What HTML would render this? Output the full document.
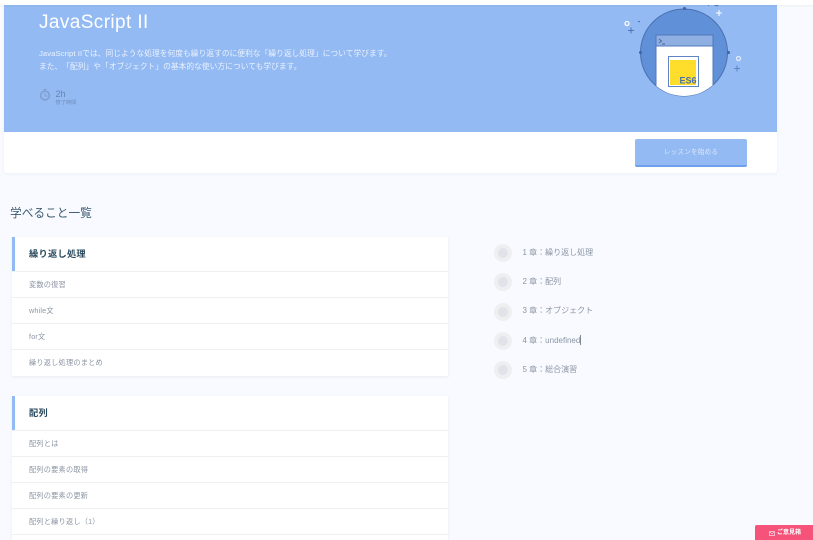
<!DOCTYPE html>
<html lang="ja"><head><meta charset="utf-8">
<style>
html,body{margin:0;padding:0;width:813px;height:540px;overflow:hidden;background:#f8faff;font-family:"Liberation Sans","Noto Sans CJK JP",sans-serif;text-spacing-trim:space-all}
#w{position:absolute;left:0;top:0;width:813px;height:540px;overflow:hidden;filter:blur(.3px)}
.a{position:absolute;white-space:nowrap}
.card{position:absolute;left:12px;width:436px;background:#fff;box-shadow:0 1px 3px rgba(40,60,90,.08);overflow:hidden}
.hd{position:absolute;left:0;top:0;width:100%;height:34px;border-left:3px solid #92baf3;box-sizing:border-box;font-size:9.200px;font-weight:bold;color:#2b4a5f;letter-spacing:.3px;line-height:35px;padding-left:14px}
.it{position:absolute;left:0;width:100%;height:26px;border-top:1px solid #edeff2;box-sizing:border-box;font-size:7.200px;color:#8b95a3;letter-spacing:.2px;line-height:26.500px;padding-left:17px}
.dot{position:absolute;left:494px;width:18px;height:18px;border-radius:50%;background:#eeeff1}
.dot i{position:absolute;left:4px;top:4px;width:10px;height:10px;border-radius:50%;background:#e1e3e8}
.ch{position:absolute;left:522.500px;font-size:8px;color:#8b95a3;letter-spacing:0;white-space:nowrap;line-height:12px}
</style></head><body><div id="w">
<div class="a" style="left:4px;top:5px;width:773px;height:168px;background:#fff;border-radius:0 0 3px 3px;box-shadow:0 1px 3px rgba(40,60,90,.06)"></div>
<div class="a" style="left:4px;top:5px;width:773px;height:127px;background:#94baf3"></div>
<div class="a" style="left:39px;top:10px;font-size:19px;line-height:26px;color:#fff;letter-spacing:.4px">JavaScript II</div>
<div class="a" style="left:39px;top:47px;font-size:7.700px;line-height:13px;color:#eaf2fd;letter-spacing:.07px">JavaScript IIでは、同じような処理を何度も繰り返すのに便利な「繰り返し処理」について学びます。<br>また、「配列」や「オブジェクト」の基本的な使い方についても学びます。</div>
<svg class="a" style="left:39px;top:88px" width="12" height="14" viewBox="0 0 12 14"><circle cx="6" cy="7.500" r="4.400" fill="none" stroke="#7f9fcf" stroke-width="1.600"/><path d="M6 5v3h2.500M4.500 1.500h3" fill="none" stroke="#7f9fcf" stroke-width="1"/></svg>
<div class="a" style="left:55.500px;top:89px;font-size:9px;line-height:11px;color:#6684b0">2h</div>
<div class="a" style="left:55.500px;top:99.500px;font-size:5.200px;line-height:7px;color:#6f8db9">修了時間</div>

<svg class="a" style="left:600px;top:0" width="177" height="132" viewBox="0 0 177 132">
<defs><clipPath id="c"><circle cx="84" cy="52.500" r="43.500"/></clipPath></defs>
<circle cx="84" cy="52.500" r="43.500" fill="#6090d8" stroke="#4a70b0" stroke-width="1"/>
<g clip-path="url(#c)">
<rect x="56" y="35" width="57" height="70" fill="#fff" stroke="#4f78bd" stroke-width="1"/>
<rect x="56" y="35" width="57" height="11" fill="#8fafe3" stroke="#4f78bd" stroke-width="1"/>
<path d="M59 39l2.500 2-2.500 2M62 44h3" fill="none" stroke="#2f4f80" stroke-width=".7"/>
<rect x="68.500" y="56.500" width="30" height="30" fill="#fff" stroke="#5f84c4" stroke-width="1"/>
<rect x="70" y="60" width="26" height="25" fill="#ffde2b"/>
</g>
<text x="79.500" y="83.500" font-family="Liberation Sans" font-weight="bold" font-size="9" fill="#4a6fae">ES6</text>
<circle cx="84.500" cy="8.500" r="1.500" fill="#3f63a3"/><circle cx="40.500" cy="52.500" r="1.500" fill="#3f63a3"/><circle cx="128.500" cy="52.500" r="1.500" fill="#3f63a3"/>
<circle cx="27" cy="23.500" r="2" fill="none" stroke="#fff" stroke-width="1.200"/>
<circle cx="39" cy="21.500" r=".8" fill="#3f63a3"/>
<path d="M31 27.500v6M28 30.500h6" stroke="#3f63a3" stroke-width=".8"/>
<path d="M119 10v6M116 13h6" stroke="#fff" stroke-width="1"/>
<circle cx="116.500" cy="3.500" r="2.300" fill="none" stroke="#3f63a3" stroke-width=".8"/>
<circle cx="108.500" cy="5" r=".7" fill="#3f63a3"/>
<circle cx="138.500" cy="58.500" r="2" fill="none" stroke="#e4edfb" stroke-width="1.200"/>
<path d="M137 65.500v6M134 68.500h6" stroke="#4f78bd" stroke-width=".8"/>
</svg>
<div class="a" style="left:0;top:0;width:813px;height:5px;background:#fff;box-shadow:0 1px 2px rgba(40,60,90,.06)"></div>

<div class="a" style="left:635px;top:139px;width:112px;height:28px;background:#94baf3;border-bottom:2px solid #6fa0ec;box-sizing:border-box;border-radius:2px;text-align:center;font-size:6.600px;line-height:27px;color:#d9e6fa;letter-spacing:.2px">レッスンを始める</div>

<div class="a" style="left:10px;top:206px;font-size:11.700px;line-height:16px;color:#3b5a70">学べること一覧</div>

<div class="card" style="top:237px;height:139px">
<div class="hd">繰り返し処理</div>
<div class="it" style="top:34px">変数の復習</div>
<div class="it" style="top:60px">while文</div>
<div class="it" style="top:86px">for文</div>
<div class="it" style="top:112px;height:27px">繰り返し処理のまとめ</div>
</div>

<div class="card" style="top:396px;height:144px">
<div class="hd">配列</div>
<div class="it" style="top:34px">配列とは</div>
<div class="it" style="top:60px">配列の要素の取得</div>
<div class="it" style="top:86px">配列の要素の更新</div>
<div class="it" style="top:112px">配列と繰り返し（1）</div>
<div class="it" style="top:138px"></div>
</div>

<div class="dot" style="top:244px"><i></i></div><div class="ch" style="top:247px">1 章：繰り返し処理</div>
<div class="dot" style="top:273px"><i></i></div><div class="ch" style="top:276px">2 章：配列</div>
<div class="dot" style="top:303px"><i></i></div><div class="ch" style="top:305px">3 章：オブジェクト</div>
<div class="dot" style="top:332px"><i></i></div><div class="ch" style="top:335px">4 章：undefined<span style="display:inline-block;width:1px;height:10px;background:#7f8895;vertical-align:-2px"></span></div>
<div class="dot" style="top:361px"><i></i></div><div class="ch" style="top:364px">5 章：総合演習</div>

<div class="a" style="left:755px;top:525px;width:58px;height:15px;background:#f5537a;border-radius:2px 0 0 0"></div>
<svg class="a" style="left:769px;top:531px" width="6" height="5" viewBox="0 0 6 5"><rect x=".5" y=".5" width="5" height="4" fill="none" stroke="#fde" stroke-width=".7"/><path d="M.5.700L3 2.800 5.500.700" fill="none" stroke="#fde" stroke-width=".6"/></svg>
<div class="a" style="left:777px;top:529px;font-size:6px;font-weight:bold;line-height:9px;color:#fff">ご意見箱</div>
</div></body></html>
